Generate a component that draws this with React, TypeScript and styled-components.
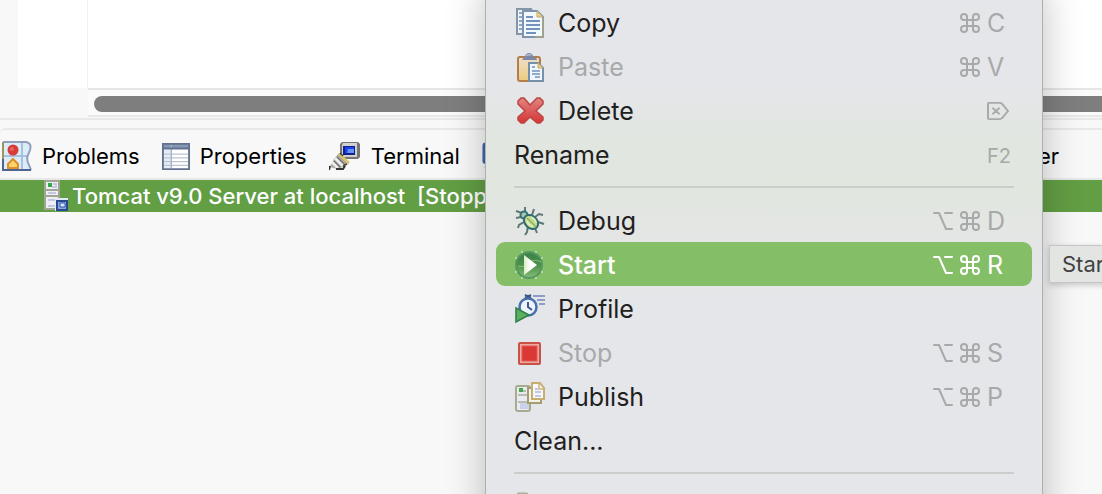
import React from "react";
import styled, { createGlobalStyle, css } from "styled-components";

const GlobalStyle = createGlobalStyle`
  *, *::before, *::after { box-sizing: border-box; }
  body {
    margin: 0;
    background: #f8f8f8;
    font-family: Inter, "Liberation Sans", sans-serif;
    color: #000;
  }
  button { font: inherit; color: inherit; border: 0; background: none; padding: 0; margin: 0; text-align: left; }
`;

const Workbench = styled.main`
  position: relative;
  min-height: 100vh;
  overflow: hidden;
`;

const Editor = styled.section`
  height: 120px;
  display: grid;
  grid-template-columns: 70px 1fr;
  grid-template-rows: 88px 30px;
  padding-left: 18px;
  border-bottom: 2px solid #e9e9e9;
`;

const Gutter = styled.div`
  background: #fff;
  border-right: 1px solid #f0f0f0;
`;

const Source = styled.div`
  background: #fff;
`;

const ScrollTrack = styled.div`
  grid-column: 2;
  height: 29px;
  padding: 6px 0 0 6px;
  border-top: 2px solid #e6e6e6;
  border-bottom: 2px solid #e8e8e8;
  background: #fafafa;
`;

const ScrollThumb = styled.div`
  height: 16px;
  border-radius: 8px 0 0 8px;
  background: #7e7e7e;
`;

const TabBar = styled.nav`
  display: flex;
  align-items: center;
  gap: 22px;
  height: 52px;
  margin-top: 8px;
  padding: 3px 43px 0 2px;
  border-top: 2px solid #e8e8e8;
  border-bottom: 2px solid #e8e8e8;
  border-top-left-radius: 6px;
  font-size: 22px;
  line-height: 28px;
`;

const Tab = styled.button<{ $end?: boolean }>`
  display: flex;
  align-items: center;
  gap: 10px;
  white-space: nowrap;
  ${(p) => p.$end && css`margin-left: auto;`}
`;

const ServerRow = styled.div`
  display: flex;
  align-items: center;
  gap: 2px;
  height: 32px;
  padding-left: 42px;
  background: #629e44;
  color: #fff;
  font-size: 22px;
  font-weight: 500;
  line-height: 28px;
  white-space: pre;
`;

const Menu = styled.div`
  position: absolute;
  top: 0;
  bottom: 0;
  left: 485px;
  right: 59px;
  overflow: hidden;
  padding: 0 10px;
  border: solid #adafb0;
  border-width: 0 1px;
  background: linear-gradient(#e5e6e9 0, #e5e6e9 88px, #e1e6e0 140px, #e1e6df 190px, #e4e6e5 240px, #e5e6e9 300px);
  color: #1f2020;
  font-size: 25px;
  line-height: 32px;
`;

const MenuShadow = styled.div`
  position: absolute;
  top: -20px;
  bottom: -60px;
  left: 485px;
  right: 59px;
  box-shadow: 0 8px 36px rgba(0, 0, 0, 0.25);
`;

const MenuItem = styled.button<{ $active?: boolean }>`
  display: flex;
  align-items: center;
  width: 100%;
  height: 44px;
  padding: 2px 18px 0;
  border-radius: 9px;
  white-space: nowrap;
  &:disabled { color: #a7a9aa; }
  ${(p) => p.$active && css`background: #84bf68; color: #fff; font-weight: 500;`}
`;

const IconSlot = styled.span`
  display: flex;
  width: 44px;
  padding-left: 1px;
`;

const Shortcut = styled.span<{ $active?: boolean }>`
  display: grid;
  grid-template-columns: auto 27px;
  column-gap: 7px;
  align-items: center;
  margin-left: auto;
  color: ${(p) => (p.$active ? "#fff" : "#a7aaa9")};
  font-weight: 400;
`;

const Modifiers = styled.span`
  display: flex;
  gap: 6px;
`;

const Key = styled.kbd<{ $small?: boolean }>`
  display: flex;
  grid-column: 2;
  font-family: inherit;
  font-size: ${(p) => (p.$small ? "20px" : "25px")};
  padding-top: ${(p) => (p.$small ? "2px" : "0")};
`;

const Separator = styled.hr`
  height: 2px;
  margin: 10px 18px;
  border: 0;
  background: #cbcdcd;
`;

const Tooltip = styled.div`
  position: absolute;
  top: 245px;
  left: calc(100% - 53px);
  width: 80px;
  padding: 3px 12px;
  border: 1px solid #c4c6c4;
  background: #e3e5e3;
  box-shadow: 0 2px 6px rgba(0, 0, 0, 0.2);
  color: #414141;
  font-size: 22px;
  line-height: 30px;
`;

function Svg({ size = 30, children }: { size?: number; children: React.ReactNode }) {
  return (
    <svg width={size} height={size} viewBox="0 0 30 30" fill="none" aria-hidden="true">
      {children}
    </svg>
  );
}

const CommandIcon = () => (
  <svg width="20" height="20" viewBox="0 0 20 20" fill="none" stroke="currentColor" strokeWidth="2" role="img" aria-label="Command">
    <path d="M7 7V4A3 3 0 1 0 4 7H16A3 3 0 1 0 13 4V16A3 3 0 1 0 16 13H4A3 3 0 1 0 7 16Z" />
  </svg>
);

const OptionIcon = () => (
  <svg width="22" height="20" viewBox="0 0 22 20" fill="none" stroke="currentColor" strokeWidth="2" strokeLinecap="round" strokeLinejoin="round" role="img" aria-label="Option">
    <path d="M2 2H7L14 18H20M13 2H20" />
  </svg>
);

const ForwardDeleteIcon = () => (
  <svg width="22" height="20" viewBox="0 0 22 20" fill="none" stroke="currentColor" strokeWidth="2" strokeLinecap="round" strokeLinejoin="round" role="img" aria-label="Forward delete">
    <path d="M2 1H13Q14 1 15 2L21 10L15 18Q14 19 13 19H2Q1 19 1 18V2Q1 1 2 1ZM6 7L12 13M12 7L6 13" transform="translate(0 1) scale(1 .9)" />
  </svg>
);

const ProblemsIcon = () => (
  <Svg>
    <path d="M1 1H24Q30 2 28 9L26 14Q24 19 27 24L29 29H1Z" fill="#dcecf8" />
    <path d="M20 1V29M2 15H26" stroke="#a9c0df" strokeWidth="2" />
    <path d="M1 1H24Q30 2 28 9L26 14Q24 19 27 24L29 29" stroke="#8ea0bd" strokeWidth="2" />
    <path d="M1 1V29" stroke="#9b965f" strokeWidth="2" />
    <path d="M1 18V29H29" stroke="#4e668f" strokeWidth="2" />
    <circle cx="11" cy="9" r="5.5" fill="#d83b38" />
    <circle cx="10" cy="8" r="2" fill="#e96661" />
    <path d="M6 27V23L11 18L16 23V27Z" fill="#ffd36a" stroke="#dc8f2c" strokeWidth="2" />
  </Svg>
);

const PropertiesIcon = () => (
  <Svg size={28}>
    <path d="M1 2H29V29H1Z" fill="#fff" />
    <path d="M1 2H29V7H1Z" fill="#8698b5" />
    <path d="M2 8H10V28H2Z" fill="#e7ecf4" />
    <path d="M2 13H28M2 17H28M2 21H28M2 25H28" stroke="#bcc4d2" strokeWidth="1.5" />
    <path d="M10 3V28" stroke="#a7b5ca" strokeWidth="1.5" />
    <path d="M1 7H29M1 2H29V29H1Z" stroke="#61728f" strokeWidth="2" />
  </Svg>
);

const TerminalIcon = () => (
  <svg width="32" height="30" viewBox="0 0 32 30" fill="none" aria-hidden="true">
    <path d="M13 1H29L31 3V16L29 18H15L11 17V3Z" fill="#77756f" />
    <path d="M14 2H28V16H13V4Z" fill="#d1d1d0" />
    <path d="M14 5H26V14H14Z" fill="#10218f" />
    <path d="M16 6H25V12H16Z" fill="#1843ed" />
    <path d="M19 8H25V12H18Z" fill="#6494f4" />
    <path d="M10 12L20 22L14 26L8 28L1 26L5 18Z" fill="#a9a8a4" />
    <path d="M6 17L14 25M3 21L9 27" stroke="#ededeb" strokeWidth="3" />
    <path d="M8 16L16 24M5 20L11 26" stroke="#77736e" strokeWidth="1.3" />
    <path d="M10 13L20 22" stroke="#dbc768" strokeWidth="2.5" />
    <path d="M11 12L14 15M14 25L18 23" stroke="#494534" strokeWidth="1.5" />
    <path d="M1 25L0 29M7 28H14L16 25" stroke="#353535" strokeWidth="2" />
  </svg>
);

const ConsoleIcon = () => (
  <Svg size={28}>
    <rect x="2" y="2" width="26" height="20" rx="2" fill="#e9eef8" stroke="#3e67ad" strokeWidth="3" />
    <path d="M3 27H27" stroke="#3e67ad" strokeWidth="2" />
  </Svg>
);

const ServerIcon = () => (
  <svg width="28" height="32" viewBox="0 0 28 32" fill="none" aria-hidden="true">
    <rect x="2" y="0" width="16" height="30" fill="#a1a594" />
    <path d="M4 2H16V9H4ZM4 11H16V15H4ZM4 17H16V28H4Z" fill="#eeeff6" />
    <path d="M6 3H10V7H6Z" fill="#35a54a" />
    <path d="M11 4H14V7H10M6 13H14M6 20H15V26H6" stroke="#c4c8dd" strokeWidth="2" />
    <path d="M13 18H26V31H13Z" fill="#e2e8f6" />
    <path d="M15 21H25V30H15Z" fill="#8aa7dd" stroke="#29498e" strokeWidth="2" />
    <path d="M18 23H23V27H18Z" fill="#d8e5fc" stroke="#3159a6" />
  </svg>
);

const CopyIcon = () => (
  <Svg>
    <path d="M2 1H16L18 4V26H2Z" fill="#edf4f7" stroke="#8495a8" strokeWidth="2" />
    <path d="M4 5H8M4 9H8M4 13H8M4 17H8M4 21H8" stroke="#6d8eba" strokeWidth="1.6" />
    <path d="M8 3H22L28 9V29H8Z" fill="#f2f9fc" stroke="#7e94ae" strokeWidth="2" />
    <path d="M22 3V9H28Z" fill="#e4cf85" stroke="#c5ac67" strokeWidth="1" />
    <path d="M28 10V29H20" stroke="#a0a18f" strokeWidth="2" />
    <path d="M11 9H18M11 13H25M11 17H25M11 21H25M11 25H21" stroke="#7392bd" strokeWidth="1.8" />
  </Svg>
);

const PasteIcon = () => (
  <Svg>
    <defs><linearGradient id="board" x2="0" y2="1"><stop stopColor="#eee1ca" /><stop offset="1" stopColor="#edca80" /></linearGradient></defs>
    <rect x="3" y="5" width="22" height="24" rx="2" fill="url(#board)" stroke="#b57e49" strokeWidth="2" />
    <path d="M7 8L10 4Q11 1 14 1Q17 1 18 4L22 7V8Z" fill="#7c88a5" />
    <path d="M11 4Q12 2 16 3" stroke="#b5bdcb" strokeWidth="1.5" />
    <path d="M14 11H23L28 16V29H14Z" fill="#f0f6fb" stroke="#7790aa" strokeWidth="2" />
    <path d="M23 11V16H28Z" fill="#e6cd83" stroke="#c5ac67" />
    <path d="M17 15H20M17 19H25M17 22H25M20 25H25" stroke="#7290bc" strokeWidth="1.7" />
  </Svg>
);

const DeleteIcon = () => (
  <Svg>
    <defs><linearGradient id="cross" x2="0" y2="1"><stop stopColor="#e18580" /><stop offset="1" stopColor="#d53436" /></linearGradient></defs>
    <path d="M3 5L6 2H9L15 9L22 2H25L28 5V8L21 15L28 21V24L25 27H22L15 21L9 27H6L3 24V21L10 15L3 8Z" fill="url(#cross)" stroke="#bd4441" strokeWidth="1.5" strokeLinejoin="round" />
  </Svg>
);

const DebugIcon = () => (
  <Svg>
    <path d="M10 1V7M1 5L7 7M6 11L1 12M9 16L4 19L3 22M13 20L12 26L10 29M17 9L19 3M20 11L24 8L28 9M23 16L29 18M20 22L22 27" stroke="#5f7775" strokeWidth="2" />
    <circle cx="9" cy="9" r="3.5" fill="#a8c8aa" stroke="#377077" strokeWidth="2" />
    <ellipse cx="16" cy="16" rx="6" ry="8" transform="rotate(-45 16 16)" fill="#c2dc8e" stroke="#2f6b72" strokeWidth="2" />
    <path d="M12 12L21 21" stroke="#87ad62" strokeWidth="1.3" />
    <path d="M12 15Q14 20 18 20" stroke="#e5eeb9" strokeWidth="2" />
    <path d="M16 11Q21 13 21 17" stroke="#e5eeb9" strokeWidth="1.5" />
  </Svg>
);

const StartIcon = () => (
  <Svg>
    <defs>
      <linearGradient id="play" x2="0" y2="1"><stop stopColor="#3c8049" /><stop offset=".5" stopColor="#4b904a" /><stop offset="1" stopColor="#86bd76" /></linearGradient>
      <linearGradient id="arrow"><stop stopColor="#d7ebc3" /><stop offset=".45" stopColor="#fff" /></linearGradient>
    </defs>
    <circle cx="14" cy="15" r="13" fill="url(#play)" stroke="#549a60" strokeWidth="2" />
    <path d="M3 16Q9 18 14 13T26 12" stroke="#8dbd77" strokeWidth="1" />
    <path d="M9 5L22 15L9 25Z" fill="url(#arrow)" />
    <g fill="#c7e0bf">
      <circle cx="7" cy="2" r="1" /><circle cx="21" cy="2" r="1" /><circle cx="1" cy="8" r="1" /><circle cx="27" cy="8" r="1" />
      <circle cx="1" cy="22" r="1" /><circle cx="27" cy="22" r="1" /><circle cx="7" cy="28" r="1" /><circle cx="21" cy="28" r="1" />
    </g>
  </Svg>
);

const ProfileIcon = () => (
  <Svg>
    <path d="M18 2H30M22 6H30M24 10H30" stroke="#8f9dc6" strokeWidth="1.8" />
    <path d="M10 1L16 4M16 1L10 4" stroke="#375785" strokeWidth="2" />
    <circle cx="13" cy="13" r="8.5" fill="#edf4fc" stroke="#4870ac" strokeWidth="2.5" />
    <path d="M13 8V13L17 16" stroke="#425889" strokeWidth="2" />
    <path d="M1 14L14 21L1 28Z" fill="#5bae62" stroke="#32814a" strokeWidth="1.6" />
  </Svg>
);

const StopIcon = () => (
  <Svg>
    <rect x="4" y="5" width="21" height="21" rx="1" fill="#ecaaa0" stroke="#ca5147" strokeWidth="2" />
    <rect x="7" y="8" width="15" height="15" fill="#da3737" stroke="#e25b50" />
  </Svg>
);

const PublishIcon = () => (
  <Svg>
    <rect x="1" y="4" width="14" height="25" rx="2" fill="#e9eaf2" stroke="#a7ac91" strokeWidth="2" />
    <path d="M3 13H13M3 20H13M6 9H11" stroke="#b8bdb2" strokeWidth="2" />
    <path d="M4 6H8V10H4Z" fill="#48a54c" />
    <path d="M5 21H14V27H5Z" fill="#cbd1e9" />
    <path d="M13 6H21L26 11V21H13Z" fill="#f5f2e6" stroke="#a49d72" strokeWidth="2" />
    <path d="M17 1H25L29 6V17H17Z" fill="#f6f8fc" stroke="#c7ad6e" strokeWidth="2" />
    <path d="M24 1V7H29" stroke="#d1b775" strokeWidth="1.5" />
    <path d="M20 7H23M20 10H26M20 14H26" stroke="#a9bae0" strokeWidth="1.5" />
  </Svg>
);

const MoreIcon = () => (
  <Svg><path d="M1 30V3L3 1H12L14 3V30Z" fill="#b8bea4" stroke="#a1a88e" /></Svg>
);

type ItemProps = {
  label?: string;
  icon?: React.ReactNode;
  option?: boolean;
  command?: boolean;
  shortcut?: React.ReactNode;
  smallKey?: boolean;
  active?: boolean;
  disabled?: boolean;
};

function Item({ label, icon, option, command, shortcut, smallKey, active, disabled }: ItemProps) {
  return (
    <MenuItem role="menuitem" $active={active} disabled={disabled} aria-label={label ?? "More"}>
      {icon && <IconSlot>{icon}</IconSlot>}
      {label}
      {shortcut && (
        <Shortcut $active={active}>
          {command && <Modifiers>{option && <OptionIcon />}<CommandIcon /></Modifiers>}
          <Key $small={smallKey}>{shortcut}</Key>
        </Shortcut>
      )}
    </MenuItem>
  );
}

export default function App() {
  return (
    <Workbench>
      <GlobalStyle />
      <Editor>
        <Gutter />
        <Source />
        <ScrollTrack><ScrollThumb /></ScrollTrack>
      </Editor>
      <TabBar>
        <Tab><ProblemsIcon />Problems</Tab>
        <Tab><PropertiesIcon />Properties</Tab>
        <Tab><TerminalIcon />Terminal</Tab>
        <Tab aria-label="Console"><ConsoleIcon /></Tab>
        <Tab $end>er</Tab>
      </TabBar>
      <ServerRow><ServerIcon />{"Tomcat v9.0 Server at localhost  [Stopp"}</ServerRow>
      <MenuShadow />
      <Menu role="menu">
        <Item label="Copy" icon={<CopyIcon />} command shortcut="C" />
        <Item label="Paste" icon={<PasteIcon />} command shortcut="V" disabled />
        <Item label="Delete" icon={<DeleteIcon />} shortcut={<ForwardDeleteIcon />} />
        <Item label="Rename" shortcut="F2" smallKey />
        <Separator />
        <Item label="Debug" icon={<DebugIcon />} option command shortcut="D" />
        <Item label="Start" icon={<StartIcon />} option command shortcut="R" active />
        <Item label="Profile" icon={<ProfileIcon />} />
        <Item label="Stop" icon={<StopIcon />} option command shortcut="S" disabled />
        <Item label="Publish" icon={<PublishIcon />} option command shortcut="P" />
        <Item label="Clean..." />
        <Separator />
        <Item icon={<MoreIcon />} />
      </Menu>
      <Tooltip role="tooltip">Start</Tooltip>
    </Workbench>
  );
}
